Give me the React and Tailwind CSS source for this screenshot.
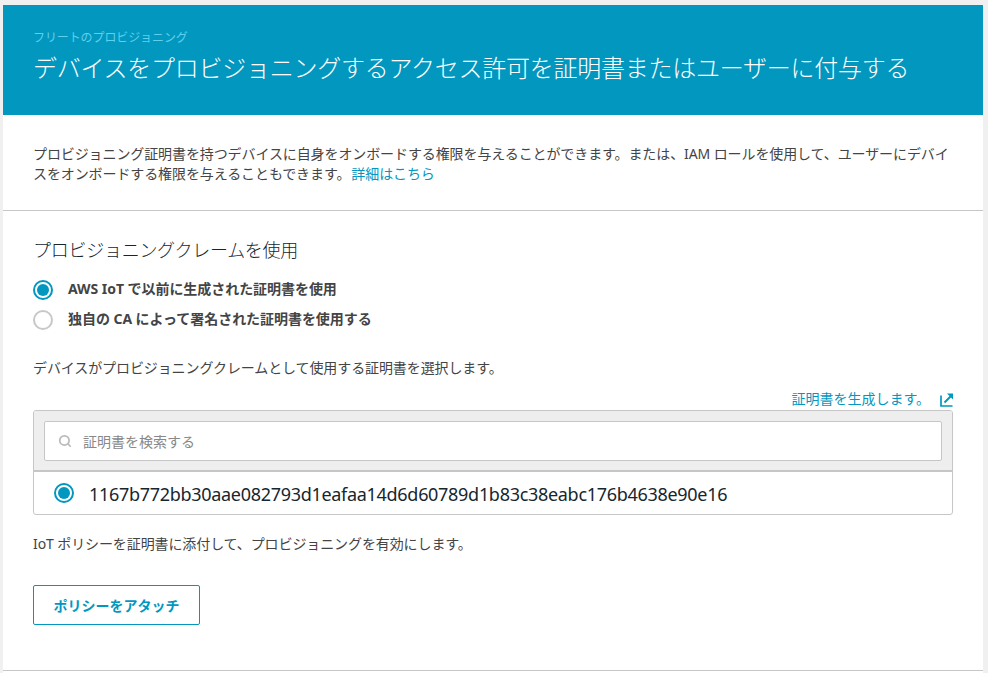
import React from "react";
import { Search } from "lucide-react";

const font = "font-['Noto_Sans','Noto_Sans_CJK_JP',sans-serif]";

const Radio = ({ checked }) => (
  <span
    className={`w-5 h-5 rounded-full border-2 bg-white flex items-center justify-center shrink-0 ${
      checked ? "border-[#0297bf]" : "border-[#c8c8c8]"
    }`}
  >
    {checked && <span className="w-3 h-3 rounded-full bg-[#0297bf]" />}
  </span>
);

const App = () => {
  return (
    <div className={`h-[673px] overflow-hidden bg-[#f0f0f0] pl-[3px] pr-[5px] pt-[5px] text-[#444] ${font}`}>
      <div className="bg-white h-full">
        {/* ヘッダー */}
        <div className="h-[110px] bg-[#0297bf] pl-[30px] pt-[24px]">
          <p className="text-[12px] leading-[18px] text-[#5ed0ee] tracking-[-0.1px]">
            フリートのプロビジョニング
          </p>
          <h1 className="text-[24px] leading-[36px] text-white font-light tracking-[-0.25px] mt-[3px]">
            デバイスをプロビジョニングするアクセス許可を証明書またはユーザーに付与する
          </h1>
        </div>

        {/* 説明 */}
        <div className="h-[96px] border-b border-[#c6c6c6] pl-[30px] pr-[30px] pt-[29px] text-[14px] leading-[20px] tracking-[-0.1px] text-[#444]">
          プロビジョニング証明書を持つデバイスに自身をオンボードする権限を与えることができます。または、IAM ロールを使用して、ユーザーにデバイスをオンボードする権限を与えることもできます。
          <a className="text-[#0297bf] ml-[1px]">詳細はこちら</a>
        </div>

        {/* プロビジョニングクレーム */}
        <div className="h-[460px] border-b border-[#c6c6c6] pl-[30px] pr-[30px] pt-[26px]">
          <h2 className="text-[18px] leading-[26px] font-light tracking-[-0.27px] text-[#16262e]">
            プロビジョニングクレームを使用
          </h2>
          <div className="mt-[17px] flex items-center gap-[15px] h-[20px]">
            <Radio checked />
            <span className="text-[14px] font-bold tracking-[-0.05px] text-[#444] mb-[3px]">
              AWS IoT で以前に生成された証明書を使用
            </span>
          </div>
          <div className="mt-[10px] flex items-center gap-[15px] h-[20px]">
            <Radio />
            <span className="text-[14px] font-bold tracking-[-0.05px] text-[#444] mb-[3px]">
              独自の CA によって署名された証明書を使用する
            </span>
          </div>
          <p className="mt-[28px] text-[14px] leading-[20px] tracking-[-0.1px] text-[#444]">
            デバイスがプロビジョニングクレームとして使用する証明書を選択します。
          </p>

          <div className="mt-[12px] h-[20px] flex justify-end items-center gap-[10px] text-[14px] text-[#0297bf]">
            <span className="mb-[3px]">証明書を生成します。</span>
            <svg width="13" height="14" viewBox="0 0 13 14" fill="none" stroke="#0297bf" strokeWidth="1.7">
              <path d="M1 2.5V13H12.5" />
              <path d="M4.5 9.5 10.5 3.5" strokeWidth="2" />
              <path d="M7 0.5H13V6.5Z" fill="#0297bf" stroke="none" />
            </svg>
          </div>

          <div className="border border-[#c6c6c6] rounded-[3px] overflow-hidden">
            <div className="bg-[#eeeeee] h-[61px] border-b-2 border-[#c6c6c6] p-[10px]">
              <div className="h-[40px] bg-white border border-[#c6c6c6] rounded-[2px] flex items-center pl-[13px] gap-[11px]">
                <Search size={14} strokeWidth={3} className="text-[#bbb]" />
                <span className="text-[14px] text-[#888]">証明書を検索する</span>
              </div>
            </div>
            <div className="h-[42px] flex items-center pl-[20px] gap-[15px]">
              <Radio checked />
              <span className="text-[18px] leading-none text-[#16262e] tracking-[-0.3px] pt-[1px]">
                1167b772bb30aae082793d1eafaa14d6d60789d1b83c38eabc176b4638e90e16
              </span>
            </div>
          </div>

          <p className="mt-[19px] text-[14px] leading-[20px] tracking-[-0.1px] text-[#444]">
            IoT ポリシーを証明書に添付して、プロビジョニングを有効にします。
          </p>

          <button className="mt-[31px] w-[167px] h-[40px] border border-[#0297bf] rounded-[2px] text-[14px] font-bold text-[#0297bf] bg-white">
            ポリシーをアタッチ
          </button>
        </div>
      </div>
    </div>
  );
};

export default App;
